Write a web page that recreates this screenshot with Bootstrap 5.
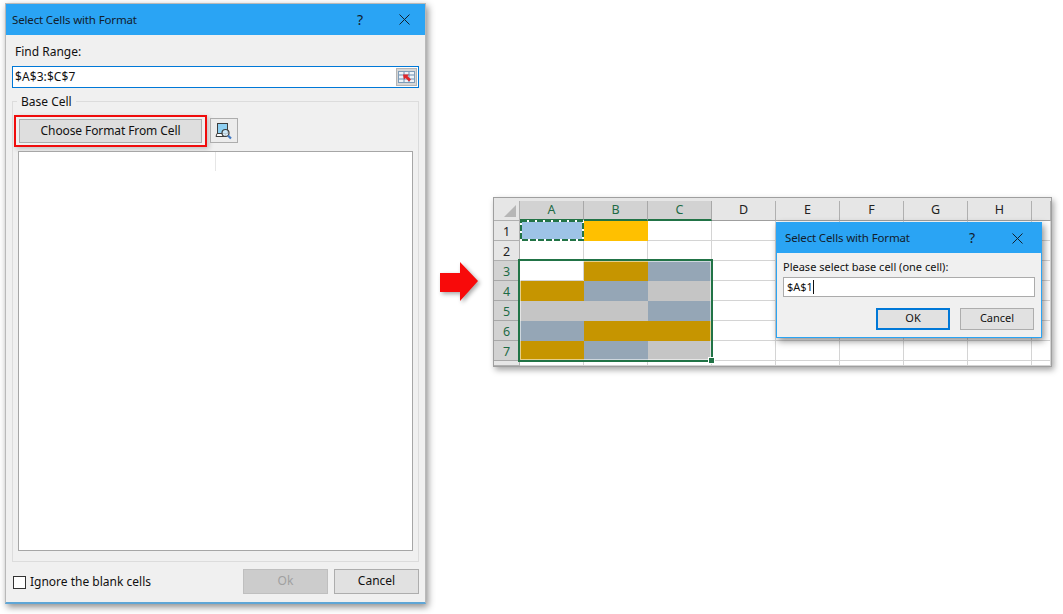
<!DOCTYPE html>
<html lang="en">
<head>
<meta charset="utf-8">
<title>Select Cells with Format</title>
<link href="https://cdn.jsdelivr.net/npm/bootstrap@5.3.0/dist/css/bootstrap.min.css" rel="stylesheet">
<style>
html,body{width:1063px;height:614px;margin:0;overflow:hidden;background:#fff}
body{font-family:"Noto Sans","DejaVu Sans",sans-serif;font-size:12px;color:#111;line-height:16px;position:relative}
.win{position:absolute;background:#f0f0f0;border:1px solid #2aa4f4;box-shadow:2px 3px 7px rgba(0,0,0,.45);display:flex;flex-direction:column}
.win-main{left:5px;top:3px;width:421px;height:601px;border-color:#b9b9b9;border-bottom:2px solid #5fa6d6}
.win-small{left:776px;top:222px;width:266px;height:116px}
.ttl{background:#2aa4f4;height:31px;flex:none;display:flex;align-items:center;font-size:11.5px;letter-spacing:-.15px;color:#12202c}
.win-main .ttl{padding-left:6px}
.win-small .ttl{height:30px;padding-left:8px}
.ttl .ttl-text{flex:1}
.ttl-help{width:14px;text-align:center;font-size:14px;margin-right:33px}
.win-main .ttl-help{margin-right:32px}
.ttl-x{margin-right:15px;display:block}
.win-small .ttl-x{margin-right:18px}
.main-body{flex:1;padding:0 6px 0 6px;display:flex;flex-direction:column}
.find-label{margin:9px 0 6px 3px;height:16px}
.range-box{height:22px;background:#fff;border:1px solid #0078d7;display:flex;align-items:center;padding:0 1px 0 2px;letter-spacing:.08px}
.range-box span{flex:1}
.ref-btn{width:21px;height:18px;background:#d6d6d6;border:1px solid #b5b5b5;display:flex;align-items:center;justify-content:center}
.base-group{margin-top:13px;height:461px;border:1px solid #dcdcdc;position:relative;padding:16px 5px 10px 5px;display:flex;flex-direction:column}
.base-legend{position:absolute;left:4px;top:-8px;background:#f0f0f0;padding:0 4px}
.choose-row{display:flex;align-items:center;height:25px;flex:none;margin-bottom:8px}
.red-frame{border:2px solid #f00c0c;padding:2px 3px;margin:-2px 3px -2px -4px;box-shadow:2px 2px 5px rgba(0,0,0,.2)}
.xl-btn{display:block;padding:0;border-radius:0;background:#e1e1e1;border:1px solid #adadad;color:#111;font-size:12px;line-height:16px}
.xl-btn:hover{background:#e1e1e1;border-color:#adadad;color:#111}
.choose-btn{width:183px;height:24px;letter-spacing:-.1px;background:#dedede}
.pick-btn{width:28px;height:25px;background:#ececec;display:flex;align-items:center;justify-content:center}
.cell-panel{flex:1;background:#fff;border:1px solid #a6a6a6;position:relative}
.cell-panel::before{content:"";position:absolute;left:196px;top:0;height:19px;border-left:1px solid #e6e6e6}
.main-foot{display:flex;align-items:center;height:25px;margin-top:7px}
.main-foot .form-check-input{width:13px;height:13px;margin:2px 0 0 1px;border:1px solid #333;border-radius:0;background-color:#fff;flex:none}
.main-foot label{flex:1;margin-left:4px;padding-top:1px}
.foot-btn{width:85px;height:25px;margin-left:6px;padding-bottom:1px}
.btn.foot-btn:disabled{background:#ccc;border-color:#bfbfbf;color:#a0a0a0;opacity:1}
.sheet{position:absolute;left:493px;top:197px;width:559px;height:170px;border:1px solid #9f9f9f;box-shadow:2px 3px 6px rgba(0,0,0,.35);background:#fff;display:grid;grid-template-columns:26px repeat(8,64px) 1fr;grid-template-rows:3px 20px repeat(7,20px) 1fr;overflow:hidden;font-size:12.5px}
.strip{grid-column:1/-1;background:#e6e6e6}
.corner{background:#e6e6e6;border-right:1px solid #b0b0b0;border-bottom:1px solid #b0b0b0;position:relative}
.corner::after{content:"";position:absolute;right:3px;bottom:3px;border-style:solid;border-width:0 0 12px 12px;border-color:transparent transparent #b6b6b6 transparent}
.ch{background:#e6e6e6;border-right:1px solid #b0b0b0;border-bottom:1px solid #9f9f9f;text-align:center;line-height:18px;color:#222}
.ch-on{background:#d2d2d2;color:#1e6b45;border-right-color:#a8a8a8;border-bottom:2px solid #217346}
.rh{background:#e6e6e6;border-right:1px solid #b0b0b0;border-bottom:1px solid #b0b0b0;text-align:center;line-height:21px;color:#222}
.rh-on{background:#d2d2d2;color:#1e6b45;border-bottom-color:#a8a8a8}
.ce{border-right:1px solid #d4d4d4;border-bottom:1px solid #d4d4d4;background:#fff}
.c-gd{background:#c69500;border-color:#c69500}
.c-bg{background:#95a6b6;border-color:#95a6b6}
.c-gr{background:#c5c5c5;border-color:#c5c5c5}
.c-bl{background:#9dc3e6;border-color:#9dc3e6}
.c-yl{background:#ffc000;border-color:#ffc000}
.sel-range{position:absolute;left:518px;top:259px;width:195px;height:103px;border:2px solid #217346;box-shadow:inset 0 0 0 1px rgba(255,255,255,.55)}
.sel-handle{position:absolute;left:708px;top:357px;width:7px;height:7px;background:#217346;border:1px solid #fff}
.sel-copy{position:absolute;left:520px;top:220px;width:64px;height:21px}
.arrow{position:absolute;left:438px;top:260px;filter:drop-shadow(2px 2px 2px rgba(0,0,0,.35))}
.small-body{flex:1;padding:0 6px;font-size:11px}
.small-label{margin-top:6px;height:16px}
.small-input{height:20px;margin-top:2px;background:#fff;border:1px solid #ababab;padding-left:3px;line-height:18px;display:flex;align-items:center;font-size:11px}
.caret-bar{display:inline-block;width:1px;height:14px;background:#111}
.small-foot{display:flex;justify-content:flex-end;margin-top:11px;padding-right:1px;gap:10px}
.small-foot .xl-btn{font-size:11px;padding-bottom:2px}
.small-foot .small-ok{width:74px;height:22px;border:2px solid #0078d7;background:#e1e1e1;line-height:16px}
.small-cancel{width:74px;height:22px;line-height:18px}
</style>
</head>
<body>

<section class="win win-main">
  <div class="ttl">
    <span class="ttl-text">Select Cells with Format</span>
    <span class="ttl-help">?</span>
    <svg class="ttl-x" width="11" height="11" viewBox="0 0 11 11"><path d="M.5.5l10 10M10.500.5l-10 10" stroke="#12202c" stroke-width="1" fill="none"/></svg>
  </div>
  <div class="main-body">
    <div class="find-label">Find Range:</div>
    <div class="range-box">
      <span>$A$3:$C$7</span>
      <div class="ref-btn">
        <svg width="17" height="12" viewBox="0 0 17 12"><rect x=".5" y=".5" width="16" height="11" fill="#eef3f8" stroke="#7f9db9"/><path d="M1 4h15M1 8h15M6 1v10M11 1v10" stroke="#6f8fb0" fill="none"/><path d="M5 3.500l6 0-1.500 1.500 3.500 3.500-2 2-3.500-3.500L6 8.500z" fill="#e0262b"/></svg>
      </div>
    </div>
    <div class="base-group">
      <div class="base-legend">Base Cell</div>
      <div class="choose-row">
        <div class="red-frame"><button type="button" class="btn xl-btn choose-btn">Choose Format From Cell</button></div>
        <button type="button" class="btn xl-btn pick-btn" aria-label="Preview">
          <svg width="18" height="18" viewBox="0 0 18 18"><rect x="2.500" y="1.500" width="10" height="10" fill="#8fd0f2" stroke="#3d3d3d"/><path d="M1 14.500h10l-1-3H2z" fill="#fff" stroke="#3d3d3d"/><circle cx="10.500" cy="11" r="3.500" fill="#d9eefa" fill-opacity=".8" stroke="#3d3d3d" stroke-width="1.200"/><path d="M13 13.500l3 3" stroke="#3f78c4" stroke-width="2.200"/></svg>
        </button>
      </div>
      <div class="cell-panel"></div>
    </div>
    <div class="main-foot">
      <input class="form-check-input" type="checkbox" id="ignoreBlank">
      <label for="ignoreBlank">Ignore the blank cells</label>
      <button type="button" class="btn xl-btn foot-btn" disabled>Ok</button>
      <button type="button" class="btn xl-btn foot-btn">Cancel</button>
    </div>
  </div>
</section>

<svg class="arrow" width="44" height="46" viewBox="0 0 44 46"><path d="M2 13h20V2l18 19-18 20V32H2z" fill="#f80a0a"/></svg>

<section class="sheet">
  <div class="strip"></div>
  <div class="corner"></div>
  <div class="ch ch-on">A</div><div class="ch ch-on">B</div><div class="ch ch-on">C</div><div class="ch">D</div><div class="ch">E</div><div class="ch">F</div><div class="ch">G</div><div class="ch">H</div><div class="ch"></div>

  <div class="rh">1</div><div class="ce c-bl"></div><div class="ce c-yl"></div><div class="ce"></div><div class="ce"></div><div class="ce"></div><div class="ce"></div><div class="ce"></div><div class="ce"></div><div class="ce"></div>
  <div class="rh">2</div><div class="ce"></div><div class="ce"></div><div class="ce"></div><div class="ce"></div><div class="ce"></div><div class="ce"></div><div class="ce"></div><div class="ce"></div><div class="ce"></div>
  <div class="rh rh-on">3</div><div class="ce"></div><div class="ce c-gd"></div><div class="ce c-bg"></div><div class="ce"></div><div class="ce"></div><div class="ce"></div><div class="ce"></div><div class="ce"></div><div class="ce"></div>
  <div class="rh rh-on">4</div><div class="ce c-gd"></div><div class="ce c-bg"></div><div class="ce c-gr"></div><div class="ce"></div><div class="ce"></div><div class="ce"></div><div class="ce"></div><div class="ce"></div><div class="ce"></div>
  <div class="rh rh-on">5</div><div class="ce c-gr"></div><div class="ce c-gr"></div><div class="ce c-bg"></div><div class="ce"></div><div class="ce"></div><div class="ce"></div><div class="ce"></div><div class="ce"></div><div class="ce"></div>
  <div class="rh rh-on">6</div><div class="ce c-bg"></div><div class="ce c-gd"></div><div class="ce c-gd"></div><div class="ce"></div><div class="ce"></div><div class="ce"></div><div class="ce"></div><div class="ce"></div><div class="ce"></div>
  <div class="rh rh-on">7</div><div class="ce c-gd"></div><div class="ce c-bg"></div><div class="ce c-gr"></div><div class="ce"></div><div class="ce"></div><div class="ce"></div><div class="ce"></div><div class="ce"></div><div class="ce"></div>
  <div class="rh"></div><div class="ce"></div><div class="ce"></div><div class="ce"></div><div class="ce"></div><div class="ce"></div><div class="ce"></div><div class="ce"></div><div class="ce"></div><div class="ce"></div>
</section>
<svg class="sel-copy" viewBox="0 0 64 21"><rect x="1" y="1" width="62" height="19" fill="none" stroke="#fff" stroke-width="2"/><rect x="1" y="1" width="62" height="19" fill="none" stroke="#217346" stroke-width="2" stroke-dasharray="6 2"/></svg>
<div class="sel-range"></div>
<div class="sel-handle"></div>

<section class="win win-small">
  <div class="ttl">
    <span class="ttl-text">Select Cells with Format</span>
    <span class="ttl-help">?</span>
    <svg class="ttl-x" width="11" height="11" viewBox="0 0 11 11"><path d="M.5.5l10 10M10.500.5l-10 10" stroke="#12202c" stroke-width="1" fill="none"/></svg>
  </div>
  <div class="small-body">
    <div class="small-label">Please select base cell (one cell):</div>
    <div class="small-input"><span>$A$1</span><i class="caret-bar"></i></div>
    <div class="small-foot">
      <button type="button" class="btn xl-btn small-ok">OK</button>
      <button type="button" class="btn xl-btn small-cancel">Cancel</button>
    </div>
  </div>
</section>

</body>
</html>
